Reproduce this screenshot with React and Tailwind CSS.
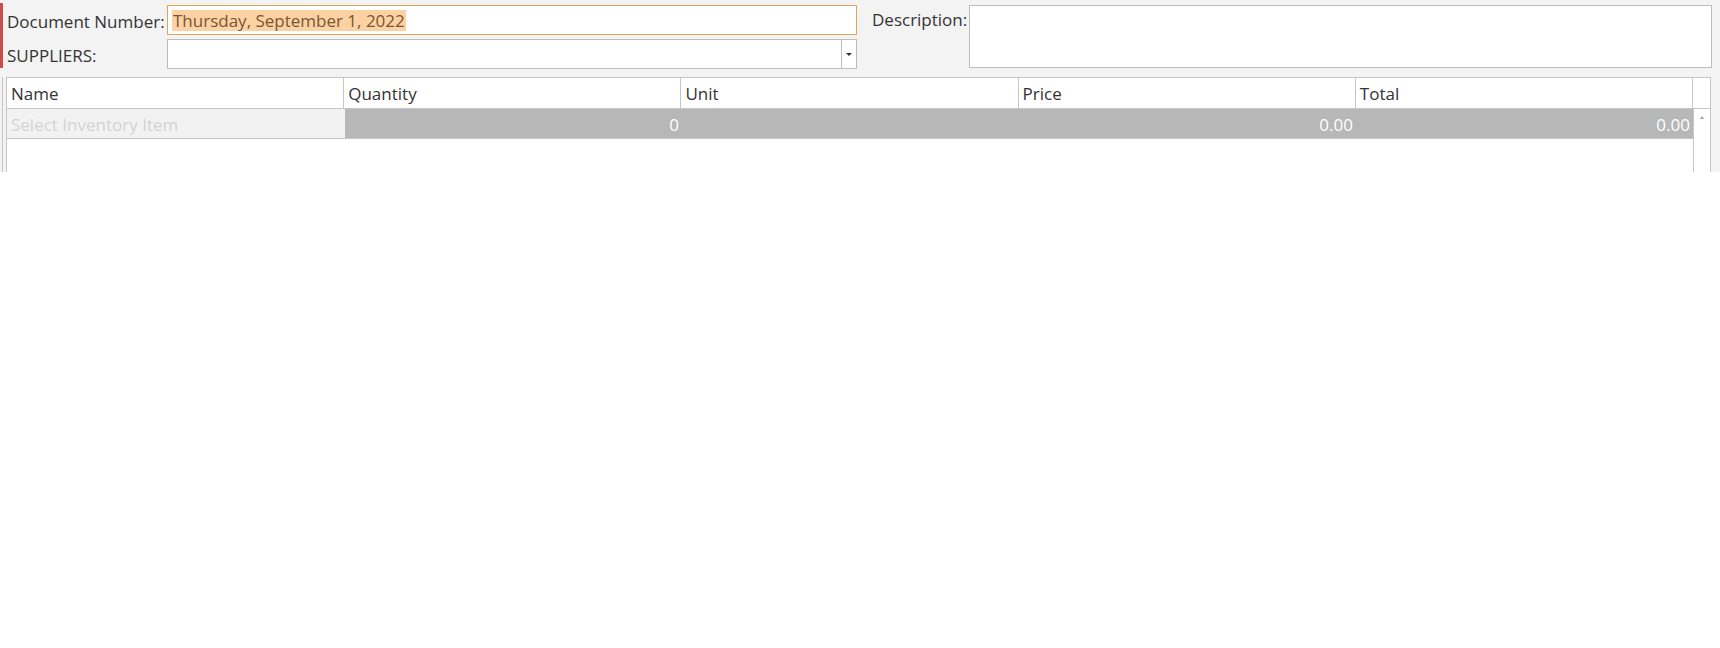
import React from 'react';

const font = { fontFamily: '"Open Sans", "Noto Sans", sans-serif' };

function HeaderCell({ children, last }) {
  return (
    <div className={`flex-1 h-full flex items-center pl-[4px] pt-[2px] text-[17px] text-[#333] bg-white ${last ? '' : 'border-r border-[#c6c6c6]'}`}>
      {children}
    </div>
  );
}

function ValueCell({ children }) {
  return (
    <div className="flex-1 h-full flex items-center justify-end pr-[3px] pt-[2px] text-[17px] text-white bg-[#b7b7b7]">
      {children}
    </div>
  );
}

export default function App() {
  return (
    <div className="w-full" style={font}>
      <div className="h-[172px] bg-[#f3f3f3] relative overflow-hidden">
        {/* form area */}
        <div className="flex pt-[3px] h-[77px]">
          <div className="w-[3px] h-[65px] bg-[#c3504e]" />
          <div className="flex flex-col gap-[4px] pt-[2px] ml-[4px]">
            <div className="flex items-center h-[30px]">
              <div className="w-[160px] text-[17px] text-[#333] leading-none whitespace-nowrap pt-[2px]">Document Number:</div>
              <div className="w-[690px] h-[30px] border border-[#e2a456] bg-white flex items-center pl-[4px] pt-[1px]">
                <span className="bg-[#fcd2a3] text-[#7a5535] text-[17px] leading-[21px] px-[1px]">Thursday, September 1, 2022</span>
              </div>
            </div>
            <div className="flex items-center h-[30px]">
              <div className="w-[160px] text-[17px] text-[#333] leading-none pt-[3px]">SUPPLIERS:</div>
              <div className="w-[690px] h-[30px] border border-[#bdbdbd] bg-white flex justify-end">
                <div className="w-[15px] h-full border-l border-[#bdbdbd] flex items-center justify-center">
                  <div className="w-0 h-0 border-l-[3px] border-r-[3px] border-t-[3px] border-l-transparent border-r-transparent border-t-[#333]" />
                </div>
              </div>
            </div>
          </div>
          <div className="flex ml-[15px] pt-[2px]">
            <div className="w-[97px] text-[17px] text-[#333] pt-[4px] leading-[22px] whitespace-nowrap">Description:</div>
            <div className="w-[743px] h-[63px] border border-[#bdbdbd] bg-white" />
          </div>
        </div>

        {/* grid */}
        <div className="absolute left-0 top-[77px] w-[3px] h-[95px] border-r border-[#c6c6c6]" />
        <div className="ml-[6px] w-[1705px] h-[110px] border border-[#c6c6c6] bg-white flex flex-col">
          <div className="flex h-[31px] border-b border-[#c6c6c6]">
            <div className="flex-1 flex h-full">
              <HeaderCell>Name</HeaderCell>
              <HeaderCell>Quantity</HeaderCell>
              <HeaderCell>Unit</HeaderCell>
              <HeaderCell>Price</HeaderCell>
              <HeaderCell>Total</HeaderCell>
            </div>
            <div className="w-[17px] h-full bg-white" />
          </div>
          <div className="flex flex-1">
            <div className="flex-1 flex flex-col">
              <div className="flex h-[30px] border-b border-[#c6c6c6]">
                <div className="flex-1 h-full flex items-center pl-[4px] pt-[2px] text-[17px] text-[#d2d2d2] bg-[#f2f2f2]">
                  Select Inventory Item
                </div>
                <ValueCell>0</ValueCell>
                <ValueCell></ValueCell>
                <ValueCell>0.00</ValueCell>
                <ValueCell>0.00</ValueCell>
              </div>
            </div>
            <div className="w-[17px] border-l border-[#c6c6c6] flex justify-center pt-[7px]">
              <div className="w-0 h-0 border-l-[2.5px] border-r-[2.5px] border-b-[3px] border-l-transparent border-r-transparent border-b-[#a0a0a0]" />
            </div>
          </div>
        </div>
      </div>
    </div>
  );
}
